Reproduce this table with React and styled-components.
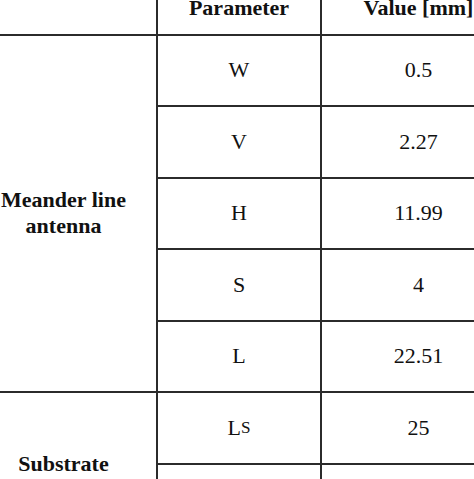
import styled, { createGlobalStyle } from "styled-components";

const GlobalStyle = createGlobalStyle`
    html, body {
        margin: 0;
        padding: 0;
        background: #ffffff;
        overflow: hidden;
    }
    body {
        width: 474px;
        height: 479px;
    }
`;

// the table is cropped on the left, top, right and bottom of the shot,
// so the grid starts a bit before the page edge
const Table = styled.div`
    display: grid;
    grid-template-columns: 185px 162px 193px;
    grid-template-rows: 51.5px repeat(7, 69.5px);
    gap: 2px;
    background: #2b2b2b;
    margin-left: -29px;
    margin-top: -18px;
    width: max-content;
    font-family: "Liberation Serif", Tinos, "Times New Roman", Times, serif;
    color: #111;
`;

const Cell = styled.div`
    background: #ffffff;
    display: flex;
    align-items: center;
    justify-content: center;
    text-align: center;
    font-family: "Liberation Serif", Tinos, "Times New Roman", Times, serif;
    font-size: 22px;
    line-height: 26px;
    font-weight: ${(p) => (p.$bold ? 700 : 400)};
    grid-row: ${(p) => p.$rows || "auto"};
`;

const Sub = styled.span`
    font-size: 0.78em;
`;

const groups = [
    {
        label: (
            <>
                Meander line
                <br />
                antenna
            </>
        ),
        rows: [
            ["W", "0.5"],
            ["V", "2.27"],
            ["H", "11.99"],
            ["S", "4"],
            ["L", "22.51"],
        ],
    },
    {
        label: "Substrate",
        rows: [
            [
                <>
                    L<Sub>S</Sub>
                </>,
                "25",
            ],
            [
                <>
                    W<Sub>S</Sub>
                </>,
                "25",
            ],
        ],
    },
];

const App = () => {
    return (
        <>
            <GlobalStyle />
            <Table>
                <Cell $bold />
                <Cell $bold>Parameter</Cell>
                <Cell $bold>Value [mm]</Cell>
                {groups.map((group, gi) =>
                    group.rows.map(([name, value], ri) => (
                        <Row
                            key={`${gi}-${ri}`}
                            first={ri === 0}
                            span={group.rows.length}
                            label={group.label}
                            name={name}
                            value={value}
                        />
                    ))
                )}
            </Table>
        </>
    );
};

const Row = ({ first, span, label, name, value }) => {
    return (
        <>
            {first && (
                <Cell $bold $rows={`span ${span}`}>
                    {label}
                </Cell>
            )}
            <Cell>{name}</Cell>
            <Cell>{value}</Cell>
        </>
    );
};

export default App;
